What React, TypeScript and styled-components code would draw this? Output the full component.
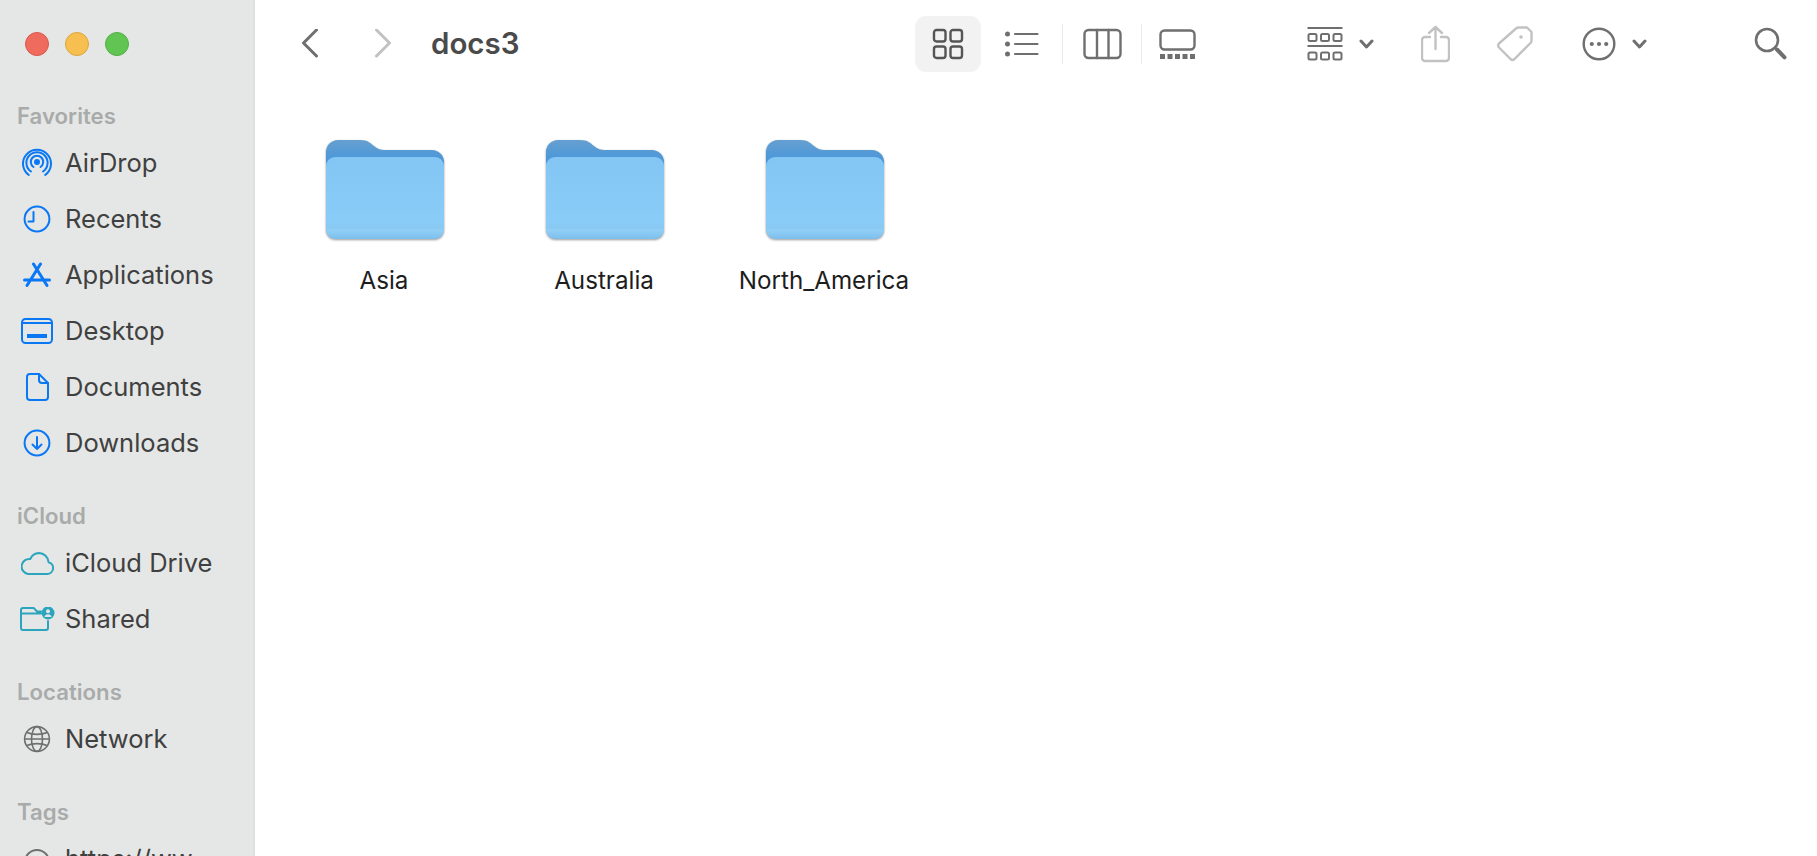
import React from "react";
import styled, { createGlobalStyle } from "styled-components";

const Global = createGlobalStyle`
  html, body { margin: 0; padding: 0; background: #fff; overflow: hidden; }
  * { box-sizing: border-box; }
`;

const Window = styled.div`
  display: flex;
  width: 1817px;
  height: 856px;
  overflow: hidden;
  font-family: Inter, "Liberation Sans", sans-serif;
  background: #fff;
`;
const Sidebar = styled.aside`
  flex: 0 0 255px;
  height: 856px;
  overflow: hidden;
  background: #e5e7e6;
  border-right: 2px solid #dfe0df;
`;
const Lights = styled.div`
  display: flex;
  gap: 16px;
  height: 97px;
  padding: 32px 0 0 25px;
`;
const Light = styled.span<{ $bg: string; $edge: string }>`
  width: 24px;
  height: 24px;
  border-radius: 50%;
  background: ${(p) => p.$bg};
  border: 1px solid ${(p) => p.$edge};
`;
const Section = styled.section`
  margin-bottom: 26px;
`;
const SectionLabel = styled.div`
  height: 38px;
  line-height: 38px;
  padding-left: 17px;
  font-size: 22.2px;
  font-weight: 600;
  color: #a9abaa;
`;
const Row = styled.div`
  display: flex;
  align-items: center;
  height: 56px;
  padding-left: 18px;
  gap: 9px;
  font-size: 25.5px;
  color: #404040;
`;
const RowText = styled.span`
  margin-bottom: 2px;
  white-space: nowrap;
`;
const IconSlot = styled.span`
  display: flex;
  align-items: center;
  justify-content: center;
  width: 38px;
  height: 38px;
  flex: none;
`;
const Main = styled.main`
  flex: 1;
  min-width: 0;
`;
const Toolbar = styled.header`
  display: flex;
  align-items: center;
  height: 87px;
  padding: 0 30px 0 25px;
`;
const NavButton = styled.span<{ $ml?: number }>`
  display: flex;
  align-items: center;
  justify-content: center;
  width: 60px;
  height: 40px;
  margin-left: ${(p) => p.$ml ?? 0}px;
`;
const Title = styled.h1`
  flex: 1;
  margin: 0 0 2px 18px;
  font-size: 29.5px;
  font-weight: 600;
  color: #4a4a4a;
`;
const ViewButton = styled.span<{ $w: number; $active?: boolean }>`
  display: flex;
  align-items: center;
  justify-content: center;
  width: ${(p) => p.$w}px;
  height: 56px;
  border-radius: 11px;
  background: ${(p) => (p.$active ? "#f2f2f2" : "transparent")};
`;
const Separator = styled.span`
  width: 1px;
  height: 40px;
  background: #e9e9e9;
`;
const Tool = styled.span<{ $ml: number }>`
  display: flex;
  align-items: center;
  gap: 16px;
  margin-left: ${(p) => p.$ml}px;
`;
const Grid = styled.div`
  display: flex;
  padding: 53px 0 0 19px;
`;
const Item = styled.figure`
  display: flex;
  flex-direction: column;
  align-items: center;
  width: 220px;
  margin: 0;
`;
const FolderArt = styled.svg`
  display: block;
  margin-left: 2px;
  filter: drop-shadow(0 1px 1px rgba(0, 0, 0, 0.4));
`;
const ItemName = styled.figcaption`
  margin-top: 26px;
  font-size: 24.2px;
  line-height: 30px;
  color: #1d1d1d;
  white-space: nowrap;
`;

const BLUE = "#0a78f5";
const TEAL = "#2aa5bd";
const GRAY = "#6f6f6f";
const LIGHT = "#c2c2c2";

type P = { w: number; h: number; c?: string; sw?: number; children: React.ReactNode };
const Ico = ({ w, h, c = BLUE, sw = 2, children }: P) => (
  <svg width={w} height={h} viewBox={`0 0 ${w} ${h}`} fill="none" stroke={c} strokeWidth={sw} strokeLinecap="round" strokeLinejoin="round">
    {children}
  </svg>
);

const AirDrop = () => (
  <Ico w={30} h={30}>
    <circle cx={15} cy={14} r={2} fill={BLUE} />
    <path d="M11.5 19a6.2 6.2 0 1 1 7 0" />
    <path d="M9 23.5a10.6 10.6 0 1 1 12 0" />
    <path d="M6.8 27a14 14 0 1 1 16.4 0" />
  </Ico>
);
const Clock = () => (
  <Ico w={28} h={28}>
    <circle cx={14} cy={14} r={12.4} />
    <path d="M10.5 7v9.5H5.5" />
  </Ico>
);
const AppsIcon = () => (
  <Ico w={28} h={26} sw={3}>
    <path d="M10.5 2l13.5 21.5M17.5 2L4 23.5M1.5 18h25" />
  </Ico>
);
const DesktopIcon = () => (
  <Ico w={32} h={26}>
    <rect x={1} y={1} width={30} height={24} rx={3.5} />
    <path d="M1 5h30" />
    <rect x={6} y={16} width={20} height={4} fill={BLUE} stroke="none" />
  </Ico>
);
const Doc = () => (
  <Ico w={23} h={28}>
    <path d="M4 1h9l9 9v14a3 3 0 0 1-3 3H4a3 3 0 0 1-3-3V4a3 3 0 0 1 3-3z" />
    <path d="M13 1v6a3 3 0 0 0 3 3h6" />
  </Ico>
);
const Download = () => (
  <Ico w={28} h={28}>
    <circle cx={14} cy={14} r={12.4} />
    <path d="M14 8v12M9.5 15.5L14 20l4.5-4.5" />
  </Ico>
);
const Cloud = () => (
  <Ico w={33} h={23} c={TEAL}>
    <path d="M7 22h19a6 6 0 0 0 1.6-11.8A10 10 0 0 0 18 1a9.5 9.5 0 0 0-8.6 6A6.6 6.6 0 0 0 7 22z" />
  </Ico>
);
const SharedIcon = () => (
  <Ico w={35} h={24} c={TEAL}>
    <path d="M1 21V3a2 2 0 0 1 2-2h10a2 2 0 0 1 1.6.8L17 4.5h4M1 6.5h20M1 21a2 2 0 0 0 2 2h23a2 2 0 0 0 2-2v-7" />
    <circle cx={28} cy={6} r={6.5} fill={TEAL} stroke="none" />
    <circle cx={28} cy={4.2} r={2} fill="#e5e7e6" stroke="none" />
    <path d="M24.5 10a3.6 3.6 0 0 1 7 0z" fill="#e5e7e6" stroke="none" />
  </Ico>
);
const Globe = () => (
  <Ico w={28} h={28} c={GRAY} sw={1.6}>
    <circle cx={14} cy={14} r={12.4} />
    <ellipse cx={14} cy={14} rx={5.5} ry={12.4} />
    <path d="M2 14h24M4 7.5c5 2.5 15 2.5 20 0M4 20.5c5-2.5 15-2.5 20 0" />
  </Ico>
);
const TagDot = () => (
  <Ico w={28} h={34} c={GRAY}>
    <circle cx={14} cy={20} r={12} />
  </Ico>
);

const Back = () => (
  <Ico w={18} h={30} c={GRAY} sw={3}>
    <path d="M15.5 1L2.5 14l13 13" />
  </Ico>
);
const Forward = () => (
  <Ico w={18} h={30} c={LIGHT} sw={3}>
    <path d="M2.5 1l13 13-13 13" />
  </Ico>
);
const GridIcon = () => (
  <Ico w={32} h={32} c="#555" sw={2.4}>
    <rect x={2} y={2} width={11.5} height={11.5} rx={2.5} />
    <rect x={18.5} y={2} width={11.5} height={11.5} rx={2.5} />
    <rect x={2} y={18.5} width={11.5} height={11.5} rx={2.5} />
    <rect x={18.5} y={18.5} width={11.5} height={11.5} rx={2.5} />
  </Ico>
);
const ListIcon = () => (
  <Ico w={34} h={26} c={GRAY} sw={2.2}>
    <circle cx={2.5} cy={3} r={1.4} fill={GRAY} />
    <circle cx={2.5} cy={13} r={1.4} fill={GRAY} />
    <circle cx={2.5} cy={23} r={1.4} fill={GRAY} />
    <path d="M10 3h22.5M10 13h22.5M10 23h22.5" />
  </Ico>
);
const ColumnsIcon = () => (
  <Ico w={39} h={32} c={GRAY} sw={2.4}>
    <rect x={1.5} y={2} width={36} height={28} rx={4} />
    <path d="M14 2v28M25.5 2v28" />
  </Ico>
);
const Gallery = () => (
  <Ico w={37} h={30} c={GRAY} sw={2.4}>
    <rect x={1.5} y={1.5} width={34} height={19} rx={4} />
    <g fill={GRAY} stroke="none">
      <rect x={1} y={25} width={5} height={5} />
      <rect x={8.5} y={25} width={5} height={5} />
      <rect x={16} y={25} width={5} height={5} />
      <rect x={23.5} y={25} width={5} height={5} />
      <rect x={31} y={25} width={5} height={5} />
    </g>
  </Ico>
);
const GroupIcon = () => (
  <Ico w={36} h={36} c={GRAY} sw={2}>
    <path d="M0.5 2h35M0.5 20h35" strokeLinecap="butt" />
    {[1.5, 14, 26.5].map((x) => (
      <g key={x}>
        <rect x={x} y={8} width={8} height={7} rx={1.5} />
        <rect x={x} y={26.5} width={8} height={7} rx={1.5} />
      </g>
    ))}
  </Ico>
);
const Chevron = () => (
  <Ico w={15} h={10} c={GRAY} sw={3}>
    <path d="M2 2l5.5 6L13 2" />
  </Ico>
);
const Share = () => (
  <Ico w={29} h={38} c={LIGHT} sw={2.4}>
    <path d="M9 12H4a3 3 0 0 0-3 3v18a3 3 0 0 0 3 3h21a3 3 0 0 0 3-3V15a3 3 0 0 0-3-3h-5" />
    <path d="M14.5 24V2M8 8l6.5-6L21 8" />
  </Ico>
);
const TagIcon = () => (
  <Ico w={38} h={38} c={LIGHT} sw={2.4}>
    <path d="M20 3.5a3 3 0 0 1 2-1h9l4.5 4.5v9a3 3 0 0 1-1 2L18.5 34a3 3 0 0 1-4 0L3 22.5a3 3 0 0 1 0-4z" />
    <circle cx={25} cy={12} r={1.8} fill={LIGHT} stroke="none" />
  </Ico>
);
const More = () => (
  <Ico w={34} h={34} c={GRAY} sw={2.4}>
    <circle cx={17} cy={17} r={15.3} />
    <g fill={GRAY} stroke="none">
      <circle cx={9.8} cy={17} r={2.1} />
      <circle cx={17} cy={17} r={2.1} />
      <circle cx={24.2} cy={17} r={2.1} />
    </g>
  </Ico>
);
const Search = () => (
  <Ico w={33} h={33} c={GRAY} sw={2.6}>
    <circle cx={13} cy={13} r={11} />
    <path d="M23 22.5l7.5 7.8" strokeWidth={4} />
  </Ico>
);

const Folder = () => (
  <FolderArt width={118} height={100} viewBox="0 0 118 100">
    <defs>
      <linearGradient id="folderBack" x1="0" y1="0" x2="0" y2="1">
        <stop offset="0" stopColor="#659fd0" />
        <stop offset="0.35" stopColor="#4d98d9" />
      </linearGradient>
      <linearGradient id="folderFront" x1="0" y1="0" x2="0" y2="1">
        <stop offset="0" stopColor="#84c6f3" />
        <stop offset="0.8" stopColor="#8accf8" />
        <stop offset="0.87" stopColor="#89c9f2" />
        <stop offset="0.89" stopColor="#91cff6" />
        <stop offset="1" stopColor="#7cbeec" />
      </linearGradient>
    </defs>
    <path d="M0 12a12 12 0 0 1 12-12h22c8 0 10 3 14 6 4 3 6 4 12 4h46a12 12 0 0 1 12 12v30H0z" fill="url(#folderBack)" />
    <rect x={0} y={17} width={118} height={82} rx={9} fill="url(#folderFront)" />
  </FolderArt>
);

const favourites: [string, React.ReactNode][] = [
  ["AirDrop", <AirDrop />],
  ["Recents", <Clock />],
  ["Applications", <AppsIcon />],
  ["Desktop", <DesktopIcon />],
  ["Documents", <Doc />],
  ["Downloads", <Download />],
];
const sections: { title: string; rows: [string, React.ReactNode][] }[] = [
  { title: "Favorites", rows: favourites },
  { title: "iCloud", rows: [["iCloud Drive", <Cloud />], ["Shared", <SharedIcon />]] },
  { title: "Locations", rows: [["Network", <Globe />]] },
  { title: "Tags", rows: [["https://ww", <TagDot />]] },
];

export default function App() {
  return (
    <Window>
      <Global />
      <Sidebar>
        <Lights>
          <Light $bg="#ef6b5e" $edge="#d9574b" />
          <Light $bg="#f6bf50" $edge="#dea43c" />
          <Light $bg="#61c554" $edge="#52ae46" />
        </Lights>
        {sections.map((s) => (
          <Section key={s.title}>
            <SectionLabel>{s.title}</SectionLabel>
            {s.rows.map(([name, icon]) => (
              <Row key={name}>
                <IconSlot>{icon}</IconSlot>
                <RowText>{name}</RowText>
              </Row>
            ))}
          </Section>
        ))}
      </Sidebar>
      <Main>
        <Toolbar>
          <NavButton><Back /></NavButton>
          <NavButton $ml={13}><Forward /></NavButton>
          <Title>docs3</Title>
          <ViewButton $w={66} $active><GridIcon /></ViewButton>
          <ViewButton $w={81}><ListIcon /></ViewButton>
          <Separator />
          <ViewButton $w={78}><ColumnsIcon /></ViewButton>
          <Separator />
          <ViewButton $w={70}><Gallery /></ViewButton>
          <Tool $ml={95}><GroupIcon /><Chevron /></Tool>
          <Tool $ml={47}><Share /></Tool>
          <Tool $ml={46}><TagIcon /></Tool>
          <Tool $ml={48}><More /><Chevron /></Tool>
          <Tool $ml={107}><Search /></Tool>
        </Toolbar>
        <Grid>
          {["Asia", "Australia", "North_America"].map((n) => (
            <Item key={n}>
              <Folder />
              <ItemName>{n}</ItemName>
            </Item>
          ))}
        </Grid>
      </Main>
    </Window>
  );
}
